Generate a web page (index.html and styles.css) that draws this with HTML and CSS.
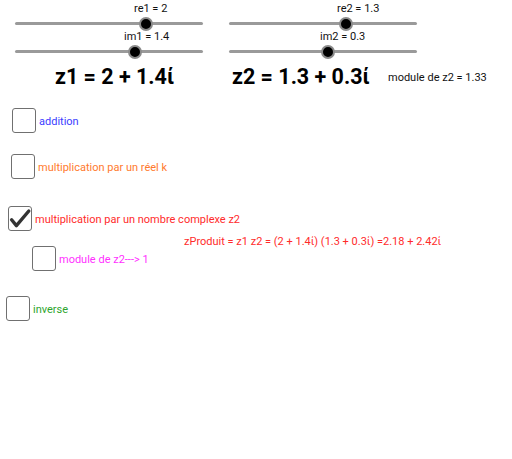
FILE: index.html
```html
<!DOCTYPE html>
<html>
<head>
<meta charset="utf-8">
<link rel="stylesheet" href="styles.css">
</head>
<body>
<div class="canvas">
  <div class="sliders">
    <div class="col col-left">
      <div class="slider">
        <div class="slabel" style="margin-left:119px">re1 = 2</div>
        <div class="track"><span class="knob" style="left:131px"></span></div>
      </div>
      <div class="slider">
        <div class="slabel" style="margin-left:109px">im1 = 1.4</div>
        <div class="track"><span class="knob" style="left:120px"></span></div>
      </div>
    </div>
    <div class="col col-right">
      <div class="slider">
        <div class="slabel" style="margin-left:108px">re2 = 1.3</div>
        <div class="track"><span class="knob" style="left:117px"></span></div>
      </div>
      <div class="slider">
        <div class="slabel" style="margin-left:91px">im2 = 0.3</div>
        <div class="track"><span class="knob" style="left:99px"></span></div>
      </div>
    </div>
  </div>

  <div class="zrow">
    <div class="z z1">z1 = 2 + 1.4ί</div>
    <div class="z z2">z2 = 1.3 + 0.3ί</div>
    <div class="module">module de z2 = 1.33</div>
  </div>

  <div class="check row1">
    <span class="box"></span><span class="lbl blue">addition</span>
  </div>
  <div class="check row2">
    <span class="box"></span><span class="lbl orange">multiplication par un réel k</span>
  </div>
  <div class="check row3">
    <span class="box checked">
      <svg viewBox="0 0 25 25" width="25" height="25"><path d="M3.6 13.7 L8.4 19.6 L20.8 5" fill="none" stroke="#333" stroke-width="3.4" stroke-linecap="round" stroke-linejoin="round"/></svg>
    </span><span class="lbl red">multiplication par un nombre complexe z2</span>
  </div>
  <div class="produit red">zProduit = z1 z2 = (2 + 1.4ί) (1.3 + 0.3ί) =2.18 + 2.42ί</div>
  <div class="check row4">
    <span class="box"></span><span class="lbl magenta">module de z2---&gt; 1</span>
  </div>
  <div class="check row5">
    <span class="box"></span><span class="lbl green">inverse</span>
  </div>
</div>
</body>
</html>
```

FILE: styles.css
```css
html, body {
  margin: 0;
  padding: 0;
  background: #ffffff;
}
body {
  font-family: Roboto, "Liberation Sans", sans-serif;
  color: #000;
  width: 512px;
  height: 459px;
  overflow: hidden;
}
.canvas {
  position: relative;
  width: 512px;
  height: 459px;
}
.sliders {
  display: flex;
  gap: 26px;
  padding-left: 15px;
}
.col {
  width: 188px;
}
.slider {
  height: 28px;
  padding-top: 2px;
  box-sizing: border-box;
}
.slabel {
  font-size: 11px;
  line-height: 13px;
  height: 13px;
  white-space: nowrap;
  color: #111;
}
.track {
  position: relative;
  margin-top: 7px;
  height: 3px;
  border-radius: 2px;
  background: #9a9a9a;
}
.knob {
  position: absolute;
  top: -5px;
  width: 10px;
  height: 10px;
  margin-left: -7px;
  border-radius: 50%;
  background: #000;
  border: 2px solid #8a8a8a;
}
.zrow {
  display: flex;
  align-items: baseline;
  padding-left: 55px;
  padding-top: 8px;
  height: 32px;
  box-sizing: border-box;
}
.z {
  font-size: 21.5px;
  font-weight: bold;
  line-height: 25px;
  white-space: nowrap;
}
.z1 { width: 177px; }
.z2 { width: 156px; }
.module {
  font-size: 11px;
  color: #111;
  white-space: nowrap;
  position: relative;
  top: -3px;
}
.check {
  display: flex;
  align-items: center;
  gap: 3px;
}
.box {
  width: 24px;
  height: 25px;
  box-sizing: border-box;
  border: 1.5px solid #707070;
  border-radius: 3px;
  flex: none;
  position: relative;
}
.box svg {
  position: absolute;
  left: -1.5px;
  top: -1.5px;
}
.lbl {
  font-size: 11px;
  line-height: 14px;
  white-space: nowrap;
  position: relative;
  top: 1px;
}
.row1 { margin-left: 12px; margin-top: 20px; }
.row2 { margin-left: 11px; margin-top: 21px; }
.row3 { margin-left: 8px; margin-top: 27px; }
.row4 { margin-left: 32px; margin-top: -3px; }
.row5 { margin-left: 6px; margin-top: 25px; }
.produit {
  margin-left: 184px;
  margin-top: 4px;
  font-size: 11px;
  line-height: 14px;
  white-space: nowrap;
}
.blue { color: #3c3cff; }
.orange { color: #ff7a2e; }
.red { color: #ff2b2b; }
.magenta { color: #ff30ff; }
.green { color: #2ea52e; }
```
